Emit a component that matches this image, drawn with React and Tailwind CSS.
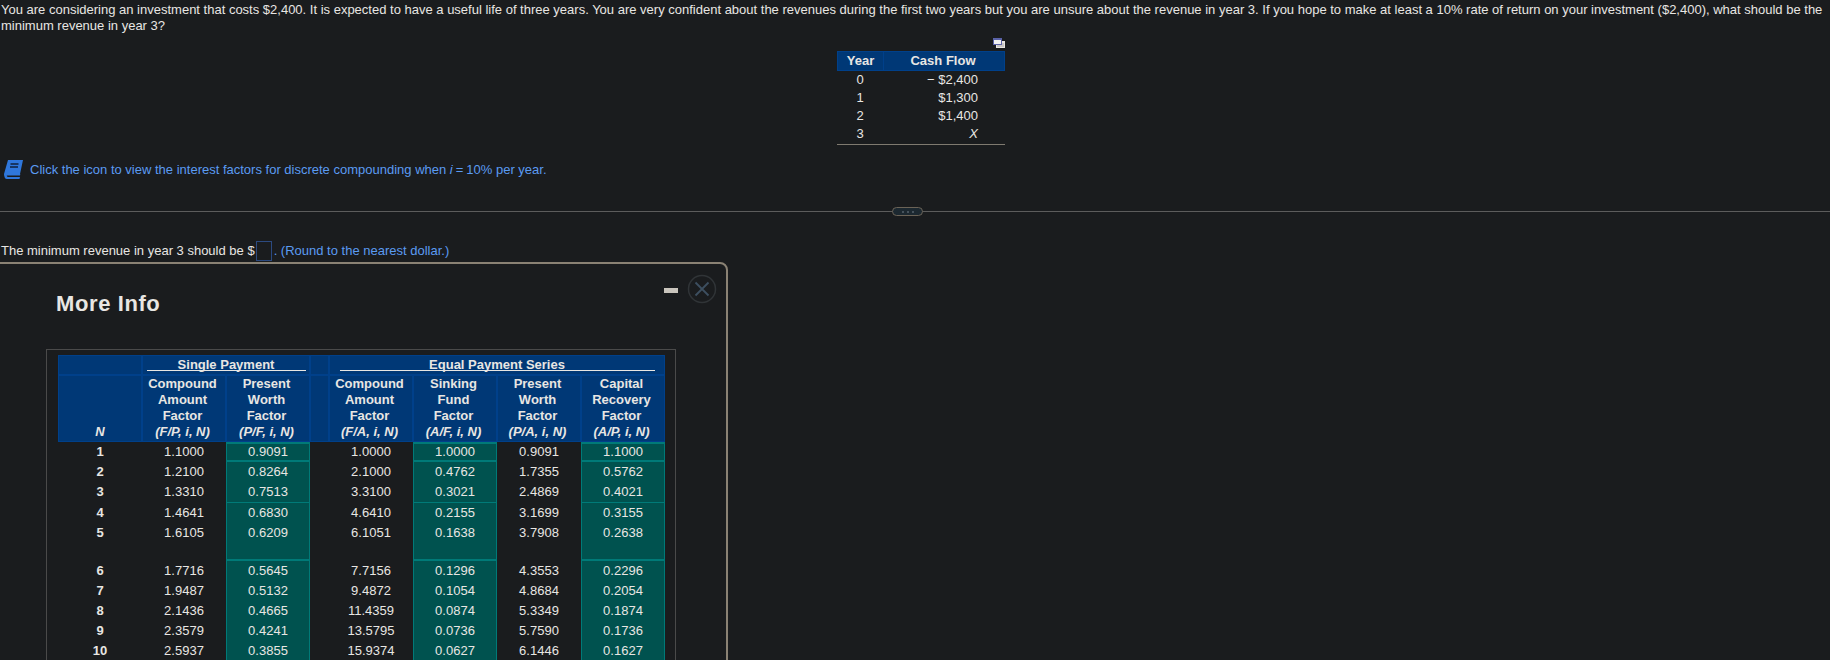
const cols = "grid grid-cols-[84px_84px_84px_19px_84px_84px_84px_84px]";

const rows = [
  { h: "h-5", v: ["1", "1.1000", "0.9091", "1.0000", "1.0000", "0.9091", "1.1000"] },
  { h: "h-5", v: ["2", "1.2100", "0.8264", "2.1000", "0.4762", "1.7355", "0.5762"] },
  { h: "h-[21px]", v: ["3", "1.3310", "0.7513", "3.3100", "0.3021", "2.4869", "0.4021"] },
  { h: "h-5", v: ["4", "1.4641", "0.6830", "4.6410", "0.2155", "3.1699", "0.3155"] },
  { h: "h-5", v: ["5", "1.6105", "0.6209", "6.1051", "0.1638", "3.7908", "0.2638"] },
  { h: "h-[18px]", v: ["", "", "", "", "", "", ""] },
  { h: "h-5", v: ["6", "1.7716", "0.5645", "7.7156", "0.1296", "4.3553", "0.2296"] },
  { h: "h-5", v: ["7", "1.9487", "0.5132", "9.4872", "0.1054", "4.8684", "0.2054"] },
  { h: "h-5", v: ["8", "2.1436", "0.4665", "11.4359", "0.0874", "5.3349", "0.1874"] },
  { h: "h-5", v: ["9", "2.3579", "0.4241", "13.5795", "0.0736", "5.7590", "0.1736"] },
  { h: "h-5", v: ["10", "2.5937", "0.3855", "15.9374", "0.0627", "6.1446", "0.1627"] },
];

const factors = [
  ["Compound", "Amount", "Factor", "(F/P, i, N)"],
  ["Present", "Worth", "Factor", "(P/F, i, N)"],
  null,
  ["Compound", "Amount", "Factor", "(F/A, i, N)"],
  ["Sinking", "Fund", "Factor", "(A/F, i, N)"],
  ["Present", "Worth", "Factor", "(P/A, i, N)"],
  ["Capital", "Recovery", "Factor", "(A/P, i, N)"],
];

const BookIcon = () => (
  <svg width="21" height="21" viewBox="0 0 21 21" className="shrink-0">
    <path d="M5 1 H20 L17 15 H4 Q2 15 1.5 17 L1 15 Z" fill="#2f77dc" />
    <path d="M1.2 15 Q1 20 4 20 H16.5 L17 18 H5 Q3.6 18 3.8 16.6 H17 L17.3 15 Z" fill="#2f77dc" />
    <path d="M7.5 5 H15.5 M7 8 H15" stroke="#10223c" strokeWidth="1.6" />
  </svg>
);

const PopoutIcon = () => (
  <svg width="12" height="10" viewBox="0 0 12 10">
    <rect x="3" y="3" width="9" height="7" fill="#e8e6e3" />
    <rect x="4" y="5" width="7" height="4" fill="#1a1c1e" opacity="0.15" />
    <rect x="0" y="0" width="9" height="7" fill="#5a62a8" />
    <rect x="1" y="2" width="7" height="4" fill="#f2f2f2" />
  </svg>
);

const CloseIcon = () => (
  <svg width="30" height="30" viewBox="0 0 30 30">
    <circle cx="15" cy="15" r="13.5" fill="none" stroke="#303437" strokeWidth="1.5" />
    <path d="M8.5 8.5 L21.5 21.5 M21.5 8.5 L8.5 21.5" stroke="#3d4f60" strokeWidth="1.8" />
  </svg>
);

const HeadCell = ({ className = "", children }) => (
  <div className={`bg-[#003876] border border-[#00408a] ${className}`}>{children}</div>
);

const GroupTitle = ({ width, children }) => (
  <div className={`mx-auto h-[14px] leading-[16px] text-center border-b border-[#e8e6e3] ${width}`}>
    {children}
  </div>
);

const CashFlow = () => (
  <div className="w-[168px] ml-[837px] text-[13px]">
    <div className="flex justify-end h-[13px]">
      <PopoutIcon />
    </div>
    <div className="flex h-5 leading-[18px] font-bold bg-[#003876] border border-[#00408a]">
      <div className="w-[46px] text-center border-r border-[#00408a]">Year</div>
      <div className="flex-1 text-center pr-[2px]">Cash Flow</div>
    </div>
    <div className="pb-[1px] border-b border-[#7f7a70]">
      {[
        ["0", "− $2,400"],
        ["1", "$1,300"],
        ["2", "$1,400"],
        ["3", "X"],
      ].map(([year, value]) => (
        <div key={year} className="flex h-[18px] leading-[18px]">
          <div className="w-[46px] text-center">{year}</div>
          <div className={`flex-1 text-right pr-[27px] ${value === "X" ? "italic" : ""}`}>{value}</div>
        </div>
      ))}
    </div>
  </div>
);

const FactorTable = () => (
  <div className="w-[607px] text-[13px] leading-4">
    <div className={`${cols} h-5 font-bold`}>
      <HeadCell />
      <HeadCell className="col-span-2 pt-[1px]">
        <GroupTitle width="w-[159px]">Single Payment</GroupTitle>
      </HeadCell>
      <HeadCell />
      <HeadCell className="col-span-4 pt-[1px]">
        <GroupTitle width="w-[315px]">Equal Payment Series</GroupTitle>
      </HeadCell>
    </div>
    <div className={`${cols} h-[67px] font-bold text-center`}>
      <HeadCell className="flex items-end justify-center italic pb-[1px]">N</HeadCell>
      {factors.map((lines, i) =>
        lines ? (
          <HeadCell key={i} className="pr-[3px]">
            <div>{lines[0]}</div>
            <div>{lines[1]}</div>
            <div>{lines[2]}</div>
            <div className="italic">{lines[3]}</div>
          </HeadCell>
        ) : (
          <HeadCell key={i} />
        )
      )}
    </div>
    {rows.map((row, i) => (
      <div key={i} className={`${cols} ${row.h} text-center`}>
        {[0, 1, 2, "gap", 3, 4, 5, 6].map((c) => {
          if (c === "gap") return <div key={c} />;
          const teal = c === 2 || c === 4 || c === 6;
          const tealClass =
            i === 0
              ? "bg-[#00524f] border-x border-y-2 border-[#007a78] leading-[16px]"
              : "bg-[#00524f] border-x border-b-2 border-[#007a78] leading-[20px]";
          return (
            <div key={c} className={teal ? tealClass : `leading-[19px] ${c === 0 ? "font-bold" : ""}`}>
              {row.v[c]}
            </div>
          );
        })}
      </div>
    ))}
  </div>
);

export default function App() {
  return (
    <div className="w-[1830px] h-[660px] overflow-hidden bg-[#1a1c1e] text-[#e8e6e3] font-['Liberation_Sans',Arial,sans-serif] text-[13px] leading-4">
      <div className="pt-[2px] pl-[1px] h-[38px]">
        You are considering an investment that costs $2,400. It is expected to have a useful life of three years. You are very confident about the revenues during the first two years but you are unsure about the revenue in year 3. If you hope to make at least a 10% rate of return on your investment ($2,400), what should be the minimum revenue in year 3?
      </div>
      <CashFlow />
      <div className="flex items-center gap-[6px] mt-[14px] pl-[3px] h-[21px] text-[#5b9bf2]">
        <BookIcon />
        <span>
          Click the icon to view the interest factors for discrete compounding when <i>i</i>
          <span className="mx-[3px]">=</span>10% per year.
        </span>
      </div>
      <div className="relative mt-[31px] h-px bg-[#5c5c5c]">
        <div className="absolute left-[892px] top-[-4px] w-[31px] h-[9px] rounded-full bg-[#1c2830] border border-[#6b6357] flex items-center justify-center gap-[3px]">
          <span className="w-[2px] h-[2px] bg-[#46525c]" />
          <span className="w-[2px] h-[2px] bg-[#46525c]" />
          <span className="w-[2px] h-[2px] bg-[#46525c]" />
        </div>
      </div>
      <div className="flex items-center h-5 mt-[29px] pl-[1px]">
        <span>The minimum revenue in year 3 should be $</span>
        <span className="w-4 h-5 ml-[1px] border border-[#2c4a80]" />
        <span className="text-[#5b9bf2] ml-[2px]">. (Round to the nearest dollar.)</span>
      </div>
      <div className="relative mt-[1px] -ml-[4px] w-[732px] h-[400px] border-2 border-[#8a8274] rounded-tr-[8px] pl-[48px]">
        <div className="absolute right-[48px] top-[24px] w-[14px] h-[5px] bg-[#c9c5bd]" />
        <div className="absolute right-[9px] top-[10px]">
          <CloseIcon />
        </div>
        <div className="pt-[28px] pl-[10px] text-[22px] leading-6 font-bold tracking-[0.6px]">More Info</div>
        <div className="w-[630px] h-[400px] mt-[33px] border border-[#4a4a4a] px-[11px] pt-[5px]">
          <FactorTable />
        </div>
      </div>
    </div>
  );
}
